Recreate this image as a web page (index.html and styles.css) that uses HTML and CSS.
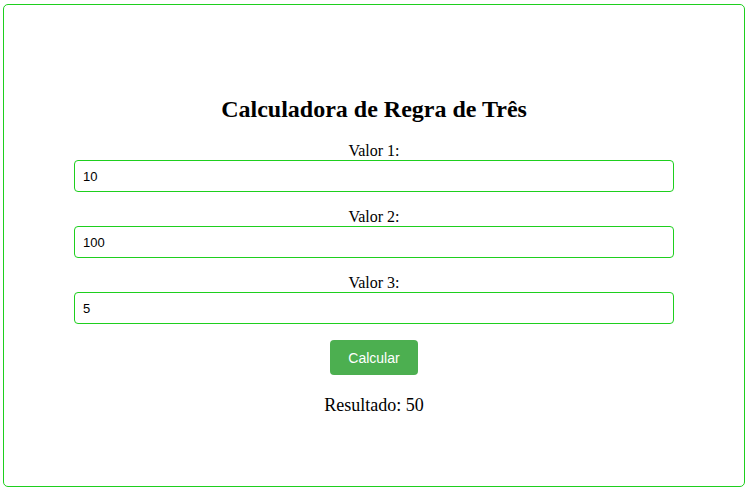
FILE: index.html
```html
<!DOCTYPE html>
<html lang="pt">
<head>
<meta charset="utf-8">
<title>Calculadora de Regra de Três</title>
<link rel="stylesheet" href="styles.css">
</head>
<body>
<div class="container">
  <h2 class="title">Calculadora de Regra de Três</h2>
  <div class="form">
    <div class="field">
      <label class="label" for="v1">Valor 1:</label>
      <input class="input" id="v1" type="text" value="10">
    </div>
    <div class="field">
      <label class="label" for="v2">Valor 2:</label>
      <input class="input" id="v2" type="text" value="100">
    </div>
    <div class="field">
      <label class="label" for="v3">Valor 3:</label>
      <input class="input" id="v3" type="text" value="5">
    </div>
    <button class="button" type="button">Calcular</button>
    <p class="result">Resultado: 50</p>
  </div>
</div>
</body>
</html>
```
FILE: styles.css
```css
html, body {
  margin: 0;
  padding: 0;
  background: #fff;
}
body {
  font-family: "Liberation Serif", "Times New Roman", serif;
  color: #000;
  padding: 4px 3px;
}
.container {
  box-sizing: border-box;
  width: 742px;
  height: 483px;
  border: 1px solid #1ecf1e;
  border-radius: 5px;
  padding-top: 90px;
  display: flex;
  flex-direction: column;
  align-items: center;
}
.title {
  margin: 0 0 19px;
  font-size: 24px;
  line-height: 28px;
  font-weight: bold;
}
.form {
  width: 600px;
  display: flex;
  flex-direction: column;
  align-items: center;
  gap: 16px;
}
.field {
  width: 100%;
  display: flex;
  flex-direction: column;
  align-items: center;
}
.label {
  font-size: 16px;
  line-height: 18px;
}
.input {
  box-sizing: border-box;
  width: 100%;
  height: 32px;
  margin: 0;
  border: 1px solid #1ecf1e;
  border-radius: 4px;
  padding: 0 8px;
  font-family: "Liberation Sans", Arial, sans-serif;
  font-size: 13px;
  color: #000;
  outline: none;
}
.button {
  box-sizing: border-box;
  width: 88px;
  height: 35px;
  border: none;
  border-radius: 4px;
  background: #4caf50;
  color: #fff;
  font-family: "Liberation Sans", Arial, sans-serif;
  font-size: 14px;
  cursor: pointer;
}
.result {
  margin: 4px 0 0;
  font-size: 18px;
  line-height: 21px;
}
```
